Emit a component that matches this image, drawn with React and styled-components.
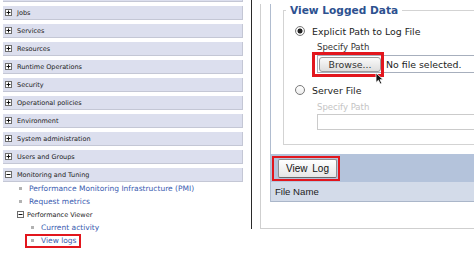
import styled, { createGlobalStyle } from 'styled-components';

const GlobalStyle = createGlobalStyle`
  html, body {
    margin: 0;
    padding: 0;
    background: #fff;
    overflow: hidden;
  }
`;

const navItems = [
  '',
  'Jobs',
  'Services',
  'Resources',
  'Runtime Operations',
  'Security',
  'Operational policies',
  'Environment',
  'System administration',
  'Users and Groups',
];

function Toggle({ open }) {
  return (
    <svg width="7" height="7" viewBox="0 0 7 7">
      <rect x="0.5" y="0.5" width="6" height="6" fill="#fff" stroke="#6c6c6c" />
      <path d="M1.5 3.5h4" stroke="#111" strokeWidth="1" />
      {!open && <path d="M3.5 1.5v4" stroke="#111" strokeWidth="1" />}
    </svg>
  );
}

function Pointer() {
  return (
    <svg width="10" height="13" viewBox="0 0 10 13">
      <path
        d="M1 1 L1 10.5 L3.4 8.3 L5.2 12 L6.8 11.3 L5 7.7 L8.2 7.7 Z"
        fill="#111"
        stroke="#fff"
        strokeWidth="0.8"
        strokeLinejoin="round"
      />
    </svg>
  );
}

export default function App() {
  return (
    <>
      <GlobalStyle />
      <Page>
        <Nav>
          {navItems.map((label, i) => (
            <NavRow key={i}>
              {label && <Toggle />}
              {label && <span>{label}</span>}
            </NavRow>
          ))}
          <NavGroup>
            <NavRow>
              <Toggle open />
              <span>Monitoring and Tuning</span>
            </NavRow>
            <SubItem $level={1}>
              <Bullet />
              <NavLink>Performance Monitoring Infrastructure (PMI)</NavLink>
            </SubItem>
            <SubItem $level={1}>
              <Bullet />
              <NavLink>Request metrics</NavLink>
            </SubItem>
            <SubFolder>
              <Toggle open />
              <span>Performance Viewer</span>
            </SubFolder>
            <SubItem $level={2}>
              <Bullet />
              <NavLink>Current activity</NavLink>
            </SubItem>
            <SubItem $level={2}>
              <Marked $inset="-2px -4px -3px -6px">
                <Bullet />
                <NavLink>View logs</NavLink>
              </Marked>
            </SubItem>
          </NavGroup>
        </Nav>

        <RightPane>
          <OuterPanel>
            <InnerPanel>
              <Fieldset>
                <Legend>View Logged Data</Legend>
                <FieldBody>
                  <RadioRow $top={7}>
                    <Radio $checked />
                    <span>Explicit Path to Log File</span>
                  </RadioRow>
                  <PathBlock>
                    <PathLabel $top={2}>Specify Path</PathLabel>
                    <FileInput>
                      <Marked $inset="-5px -3px -5px -7px" $thick>
                        <BrowseButton>Browse...</BrowseButton>
                      </Marked>
                      <span>No file selected.</span>
                      <CursorSpot>
                        <Pointer />
                      </CursorSpot>
                    </FileInput>
                  </PathBlock>
                  <RadioRow $top={10}>
                    <Radio />
                    <span>Server File</span>
                  </RadioRow>
                  <PathBlock>
                    <PathLabel $top={3} $disabled>
                      Specify Path
                    </PathLabel>
                    <TextBox />
                  </PathBlock>
                </FieldBody>
              </Fieldset>

              <ButtonBar>
                <Marked $inset="-3px -3px -3px -6px">
                  <ViewLogButton>View Log</ViewLogButton>
                </Marked>
              </ButtonBar>
              <TableHead>File Name</TableHead>
            </InnerPanel>
          </OuterPanel>
        </RightPane>
      </Page>
    </>
  );
}

const Page = styled.div`
  display: flex;
  width: 474px;
  height: 253px;
  overflow: hidden;
  background: #fff;
`;

const Nav = styled.div`
  flex: 0 0 248px;
  display: flex;
  flex-direction: column;
  gap: 4px;
  padding-left: 3px;
  margin-top: -12px;
  font-family: 'DejaVu Sans', sans-serif;
  font-size: 6.5px;
  color: #222;
`;

const NavGroup = styled.div`
  display: flex;
  flex-direction: column;
`;

const NavRow = styled.div`
  width: 240px;
  height: 14px;
  box-sizing: border-box;
  display: flex;
  align-items: center;
  gap: 5px;
  padding-left: 2px;
  background: #dcdfee;
  border-right: 1px solid #c4c7d5;
  border-bottom: 1px solid #c4c7d5;
  white-space: nowrap;

  svg {
    flex: 0 0 auto;
  }
`;

const SubItem = styled.div`
  height: 13px;
  display: flex;
  align-items: center;
  padding-left: ${(p) => (p.$level === 2 ? 28 : 16)}px;
  white-space: nowrap;
`;

const SubFolder = styled.div`
  height: 13px;
  display: flex;
  align-items: center;
  gap: 3px;
  padding-left: 14px;
  white-space: nowrap;
`;

const Bullet = styled.span`
  width: 3px;
  height: 3px;
  margin-right: 7px;
  background: #b2b2b2;
  flex: 0 0 auto;
`;

const NavLink = styled.span`
  font-size: 7.5px;
  color: #3a5cb0;
`;

const Marked = styled.span`
  position: relative;
  display: inline-flex;
  align-items: center;

  &::after {
    content: '';
    position: absolute;
    inset: ${(p) => p.$inset};
    border: ${(p) => (p.$thick ? 3 : 2)}px solid #e2161d;
    pointer-events: none;
  }
`;

const RightPane = styled.div`
  flex: 0 0 320px;
  border-left: 1px solid #2a2a2a;
  padding-left: 8px;
  align-self: flex-start;
`;

const OuterPanel = styled.div`
  border-left: 1px solid #cfcfcf;
  border-bottom: 1px solid #cfcfcf;
  padding: 0 0 26px 9px;
`;

const InnerPanel = styled.div`
  border-left: 1px solid #b0bccf;
`;

const Fieldset = styled.fieldset`
  margin: 4px 0 9px 12px;
  padding: 0 0 14px 2px;
  border: 1px solid #d3d3d3;
  min-width: 0;
`;

const Legend = styled.legend`
  padding: 0 4px;
  font-family: 'DejaVu Sans', sans-serif;
  font-weight: bold;
  font-size: 10.6px;
  line-height: 13px;
  color: #2d5190;
`;

const FieldBody = styled.div`
  padding-left: 9px;
  font-family: 'DejaVu Sans', sans-serif;
  font-size: 9.4px;
  color: #222;
`;

const RadioRow = styled.div`
  margin-top: ${(p) => p.$top}px;
  height: 14px;
  display: flex;
  align-items: center;
  gap: 7px;
  white-space: nowrap;
`;

const Radio = styled.span`
  width: 10px;
  height: 10px;
  box-sizing: border-box;
  border-radius: 50%;
  border: 1px solid #7a7a7a;
  background: ${(p) =>
    p.$checked
      ? 'radial-gradient(circle, #222 0 2.2px, #f4f4f4 2.8px)'
      : 'linear-gradient(#fff, #ececec)'};
  flex: 0 0 auto;
`;

const PathBlock = styled.div`
  padding-left: 22px;
`;

const PathLabel = styled.div`
  margin-top: ${(p) => p.$top}px;
  line-height: 14px;
  font-size: 8.5px;
  color: ${(p) => (p.$disabled ? '#c4c4c4' : '#333')};
`;

const FileInput = styled.div`
  position: relative;
  margin-top: 1px;
  width: 400px;
  height: 18px;
  box-sizing: border-box;
  display: flex;
  align-items: center;
  gap: 5px;
  padding-left: 1px;
  border: 1px solid #a7afbd;
  white-space: nowrap;
`;

const BrowseButton = styled.span`
  width: 62px;
  height: 15px;
  box-sizing: border-box;
  display: flex;
  align-items: center;
  justify-content: center;
  border: 1px solid #9c9c9c;
  border-radius: 3px;
  background: linear-gradient(#fafafa, #dddddd);
  color: #333;
`;

const CursorSpot = styled.span`
  position: absolute;
  left: 57px;
  top: 16px;
  line-height: 0;
`;

const TextBox = styled.div`
  width: 400px;
  height: 16px;
  box-sizing: border-box;
  border: 1px solid #cbcbcb;
`;

const ButtonBar = styled.div`
  height: 28px;
  display: flex;
  align-items: center;
  padding-left: 7px;
  background: #b4c3db;
`;

const ViewLogButton = styled.span`
  width: 59px;
  height: 19px;
  box-sizing: border-box;
  display: flex;
  align-items: center;
  justify-content: center;
  border: 1px solid #8e8e8e;
  border-bottom-color: #6a6a6a;
  border-radius: 2px;
  background: linear-gradient(#ffffff, #e6e6e6);
  font-family: 'Liberation Sans', Arial, sans-serif;
  font-size: 10px;
  word-spacing: 2px;
  color: #111;
`;

const TableHead = styled.div`
  height: 20px;
  box-sizing: border-box;
  padding-left: 4px;
  line-height: 19px;
  background: #d3dbe9;
  border-bottom: 1px solid #aab6c9;
  font-family: 'Liberation Sans', Arial, sans-serif;
  font-size: 9.6px;
  color: #222;
`;
